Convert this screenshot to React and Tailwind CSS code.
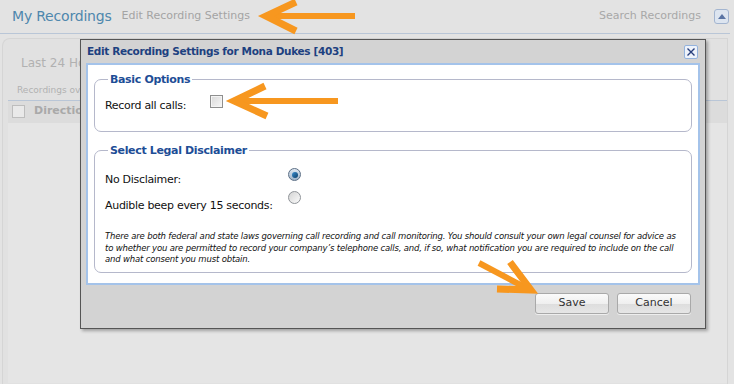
import React from "react";

const FONT = { fontFamily: '"DejaVu Sans", Verdana, sans-serif' };

const Checkbox = () => (
  <span className="inline-block w-[13px] h-[13px] border border-[#8e8f8f] bg-gradient-to-br from-[#d9d9d9] to-[#f7f7f7] shadow-[inset_0_0_0_1px_#f4f4f4]" />
);

const Radio = ({ checked }) =>
  checked ? (
    <span className="inline-flex items-center justify-center w-[13px] h-[13px] rounded-full border border-[#5c6f86] bg-gradient-to-b from-[#dfe8f2] to-[#9fb3c8]">
      <span className="w-[6px] h-[6px] rounded-full bg-gradient-to-br from-[#3b8fd0] to-[#0d3f6b]" />
    </span>
  ) : (
    <span className="inline-block w-[13px] h-[13px] rounded-full border border-[#8f9398] bg-gradient-to-br from-[#d4d4d4] to-[#fbfbfb]" />
  );

const Fieldset = ({ legend, className, children }) => (
  <fieldset
    className={`mx-[6px] border border-[#b5b8cb] rounded-[7px] px-[10px] ${className}`}
  >
    <legend className="ml-[3px] px-[2px] text-[11px] font-bold text-[#1d4d96] tracking-[-0.35px] leading-[13px]">
      {legend}
    </legend>
    {children}
  </fieldset>
);

const Button = ({ children }) => (
  <button className="w-[74px] h-[21px] rounded-[3px] border border-[#a9a9a9] bg-[linear-gradient(#fbfbfb_0%,#efefef_50%,#dddddd_51%,#e6e6e6_100%)] text-[11px] text-[#333] shadow-[0_1px_0_#eee]">
    {children}
  </button>
);

const Arrows = () => (
  <svg
    className="absolute inset-0 pointer-events-none"
    width="734"
    height="384"
    viewBox="0 0 734 384"
  >
    <g fill="none" stroke="#f7971f" strokeWidth="6" strokeLinejoin="miter">
      <line x1="355" y1="16" x2="268" y2="16" />
      <polyline points="296,2 266,16 296,31" strokeWidth="7" />
      <line x1="338" y1="101" x2="236" y2="101" />
      <polyline points="265,86 234,101 267,116" strokeWidth="7" />
      <line x1="479" y1="263" x2="530" y2="290" />
      <polyline points="510,262 531,290 497,289" strokeWidth="7" />
    </g>
  </svg>
);

export default function App() {
  return (
    <div
      className="relative w-[734px] h-[384px] overflow-hidden bg-[#e3e3e3]"
      style={FONT}
    >
      {/* page header */}
      <div className="flex items-center h-[34px] mr-[4px] border-b border-[#b9c6d7] pl-[12px] pr-[1px]">
        <span className="text-[14px] text-[#4e87ad] tracking-[-0.2px]">
          My Recordings
        </span>
        <span className="ml-[10px] text-[11px] text-[#a4a4a4]">
          Edit Recording Settings
        </span>
        <span className="ml-auto text-[11px] text-[#a8a8a8]">
          Search Recordings
        </span>
        <span className="ml-[13px] flex items-center justify-center w-[15px] h-[15px] rounded-[3px] border border-[#a3b5d0] bg-[#dde5f0]">
          <span className="w-0 h-0 border-x-[4px] border-x-transparent border-b-[5px] border-b-[#5a74a4]" />
        </span>
      </div>

      {/* underlying panel */}
      <div className="mt-[4px] ml-[2px] mr-[6px] h-[346px] rounded-tl-[8px] border-l border-t border-r border-[#d5d5d5] bg-[#e1e1e1]">
        <div className="pl-[18px] pt-[15px] text-[12px] text-[#b1b1b1]">
          Last 24 Hours
        </div>
        <div className="pl-[14px] pt-[12px] text-[9px] text-[#b1b1b1]">
          Recordings over the last 24 hours
        </div>
        <div className="mt-[2px] ml-[5px] border-t border-[#b9c6d7]">
          <div className="flex items-center h-[22px] bg-[#dcdcdc] pl-[4px]">
            <span className="inline-block w-[13px] h-[13px] border border-[#bdbdbd] bg-[#e9e9e9]" />
            <span className="ml-[9px] text-[11px] font-bold text-[#a9a9a9]">
              Direction
            </span>
          </div>
          <div className="h-[260px] bg-[#e5e5e5]" />
        </div>
      </div>

      {/* modal dialog */}
      <div className="absolute left-[80px] top-[39px] w-[626px] h-[290px] border border-[#555] bg-[#d3d3d3] shadow-[2px_2px_3px_rgba(0,0,0,0.3)] flex flex-col">
        <div className="flex items-center h-[23px] pl-[6px] pr-[7px]">
          <span className="text-[10.5px] font-bold text-[#1d4180] tracking-[-0.35px]">
            Edit Recording Settings for Mona Dukes [403]
          </span>
          <span className="ml-auto flex items-center justify-center w-[14px] h-[14px] rounded-[2px] border border-[#94b3dd] bg-[#eef3fb]">
            <svg width="10" height="10" viewBox="0 0 10 10">
              <path
                d="M1.5 1.5 L8.5 8.5 M8.5 1.5 L1.5 8.5"
                stroke="#283f7c"
                strokeWidth="1.4"
              />
            </svg>
          </span>
        </div>
        <div className="mx-[5px] h-[222px] border-2 border-[#a4c3ea] bg-white pt-[8px] text-[11px] text-[#111] tracking-[-0.3px]">
          <Fieldset legend="Basic Options" className="h-[59px]">
            <div className="flex items-start h-[22px] mt-[9px]">
              <span className="w-[105px] mt-[3px]">Record all calls:</span>
              <Checkbox />
            </div>
          </Fieldset>
          <Fieldset legend="Select Legal Disclaimer" className="mt-[12px] h-[129px]">
            <div className="flex items-end h-[20px] mt-[11px]">
              <span className="w-[183px]">No Disclaimer:</span>
              <span className="mb-[5px]">
                <Radio checked />
              </span>
            </div>
            <div className="flex items-end h-[20px] mt-[6px]">
              <span className="w-[183px]">Audible beep every 15 seconds:</span>
              <span className="mb-[5px]">
                <Radio />
              </span>
            </div>
            <p className="mt-[17px] text-[8.5px] italic leading-[11.5px] tracking-[-0.17px] whitespace-nowrap">
              There are both federal and state laws governing call recording
              and call monitoring. You should consult your own legal counsel
              for advice as
              <br />
              to whether you are permitted to record your company’s telephone
              calls, and, if so, what notification you are required to include
              on the call
              <br />
              and what consent you must obtain.
            </p>
          </Fieldset>
        </div>
        <div className="flex justify-end gap-[8px] pr-[14px] pt-[8px]">
          <Button>Save</Button>
          <Button>Cancel</Button>
        </div>
      </div>

      <Arrows />
    </div>
  );
}
